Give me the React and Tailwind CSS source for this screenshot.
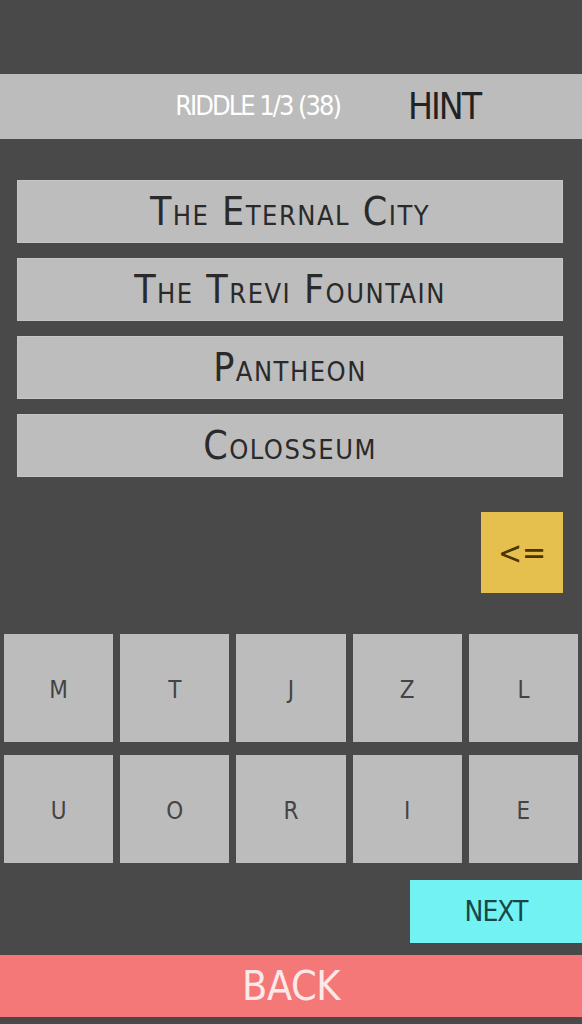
import React from "react";

const cond = { fontFamily: '"DejaVu Sans Condensed", "DejaVu Sans", sans-serif', fontStretch: "condensed" };

export default function App() {
  const answers = ["The Eternal City", "The Trevi Fountain", "Pantheon", "Colosseum"];
  const keys = ["M", "T", "J", "Z", "L", "U", "O", "R", "I", "E"];
  return (
    <div className="w-[582px] h-[1024px] bg-[#494949] overflow-hidden flex flex-col" style={cond}>
      <div className="h-[74px] shrink-0" />
      <div className="h-[65px] shrink-0 bg-[#bcbcbc] flex items-center justify-end pr-[102px] gap-[68px]">
        <span className="text-white text-[27px] tracking-[-2px] leading-none mt-[-2px]">RIDDLE 1/3 (38)</span>
        <span className="text-[#222] text-[37px] tracking-[-2px] leading-none">HINT</span>
      </div>
      <div className="mt-[41px] pl-[17px] pr-[19px] flex flex-col gap-[15px]">
        {answers.map((a) => (
          <div key={a} className="h-[63px] bg-[#bdbdbd] border border-[#c6c6c6] flex items-center justify-center">
            <span className="text-[#2a2a2a] text-[39px] leading-none [font-variant:small-caps] tracking-[1.5px]">{a}</span>
          </div>
        ))}
      </div>
      <div className="mt-[35px] flex justify-end pr-[19px]">
        <div className="w-[82px] h-[81px] bg-[#e6c04f] flex items-center justify-center">
          <span className="text-[#4a3400] text-[32px] leading-none">&lt;=</span>
        </div>
      </div>
      <div className="mt-[41px] px-[4px] grid grid-cols-5 gap-x-[7px] gap-y-[13px]">
        {keys.map((k) => (
          <div key={k} className="h-[108px] bg-[#bcbcbc] flex items-center justify-center">
            <span className="text-[#444] text-[24px] leading-none mt-[4px]">{k}</span>
          </div>
        ))}
      </div>
      <div className="mt-[17px] flex justify-end">
        <div className="w-[172px] h-[63px] bg-[#72f2f2] flex items-center justify-center">
          <span className="text-[#17474a] text-[28px] tracking-[-1px] leading-none">NEXT</span>
        </div>
      </div>
      <div className="mt-[12px] h-[62px] bg-[#f47878] flex items-center justify-center">
        <span className="text-[#fbe9e9] text-[41px] tracking-[-0.5px] leading-none">BACK</span>
      </div>
    </div>
  );
}
